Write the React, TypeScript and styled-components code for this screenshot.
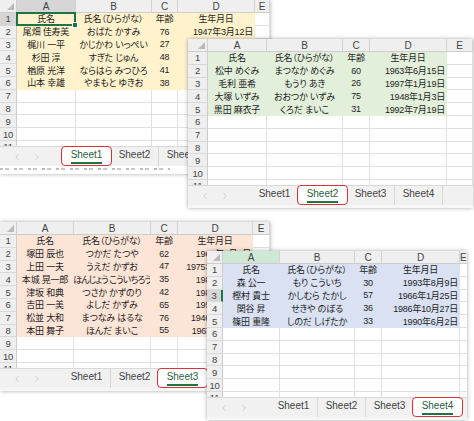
import styled, { createGlobalStyle } from 'styled-components'
import { ChevronLeft, ChevronRight } from 'lucide-react'

const GlobalStyle = createGlobalStyle`
  html, body {
    margin: 0;
    padding: 0;
    background: #fff;
  }
  body {
    font-family: "Liberation Sans", "Noto Sans CJK JP", sans-serif;
  }
`

type Sheet = {
  left: number
  top: number
  width: number
  z: number
  cols: number[]
  fill: string
  rows: string[][]
  active: number
  selCol?: number
  selRow?: number
  greenCol?: number
  status?: boolean
}

const HEAD = ['氏名', '氏名（ひらがな）', '年齢', '生年月日']
const LETTERS = ['A', 'B', 'C', 'D', 'E']
const TABS = ['Sheet1', 'Sheet2', 'Sheet3', 'Sheet4']

const sheets: Sheet[] = [
  {
    left: 0,
    top: 0,
    width: 270,
    z: 1,
    cols: [17, 59, 76, 26, 77],
    fill: '#fff2cc',
    active: 0,
    selCol: 0,
    selRow: 1,
    status: true,
    rows: [
      HEAD,
      ['尾畑 佳寿美', 'おばた かすみ', '76', '1947年3月12日'],
      ['梶川 一平', 'かじかわ いっぺい', '27', '1996年5月20日'],
      ['杉田 淳', 'すぎた じゅん', '48', '1975年9月1日'],
      ['楢原 光洋', 'ならはら みつひろ', '41', '1982年7月14日'],
      ['山本 幸雄', 'やまもと ゆきお', '38', '1985年2月8日']
    ]
  },
  {
    left: 188,
    top: 39,
    width: 285,
    z: 2,
    cols: [20, 59, 76, 27, 77],
    fill: '#e2efda',
    active: 1,
    rows: [
      HEAD,
      ['松中 めぐみ', 'まつなか めぐみ', '60', '1963年6月15日'],
      ['毛利 亜希', 'もうり あき', '26', '1997年1月19日'],
      ['大塚 いずみ', 'おおつか いずみ', '75', '1948年1月3日'],
      ['黒田 麻衣子', 'くろだ まいこ', '31', '1992年7月19日']
    ]
  },
  {
    left: 0,
    top: 222,
    width: 270,
    z: 3,
    cols: [17, 57, 77, 27, 75],
    fill: '#fce4d6',
    active: 2,
    rows: [
      HEAD,
      ['塚田 辰也', 'つかだ たつや', '62', '1961年8月2日'],
      ['上田 一夫', 'うえだ かずお', '47', '1975年10月12日'],
      ['本城 晃一郎', 'ほんじょう こういちろう', '35', '1988年3月5日'],
      ['津坂 和典', 'つさか かずのり', '42', '1981年9月8日'],
      ['吉田 一美', 'よしだ かずみ', '65', '1958年1月7日'],
      ['松並 大和', 'まつなみ はるな', '76', '1946年12月4日'],
      ['本田 舞子', 'ほんだ まいこ', '55', '1967年11月9日']
    ]
  },
  {
    left: 207,
    top: 251,
    width: 260,
    z: 4,
    cols: [16, 57, 75, 27, 78],
    fill: '#d9e1f2',
    active: 3,
    greenCol: 0,
    selRow: 3,
    rows: [
      HEAD,
      ['森 公一', 'もり こういち', '30', '1993年8月9日'],
      ['樫村 貴士', 'かしむら たかし', '57', '1966年1月25日'],
      ['関谷 昇', 'せきや のぼる', '36', '1986年10月27日'],
      ['篠田 重隆', 'しのだ しげたか', '33', '1990年6月2日']
    ]
  }
]

const App = () => {
  return (
    <>
      <GlobalStyle />
      <Canvas>
        {sheets.map((s, i) => (
          <Window key={i} $left={s.left} $top={s.top} $width={s.width} $z={s.z}>
            <Grid $cols={s.cols.map((c) => `${c}px`).join(' ') + ' 1fr'}>
              <Corner />
              {LETTERS.map((l, c) => (
                <ColHeader
                  key={l}
                  $hl={s.selCol === c && s.selRow !== undefined && s.greenCol === undefined}
                  $green={s.greenCol === c}
                >
                  {l}
                </ColHeader>
              ))}
              {Array.from({ length: 11 }, (_, r) => {
                const row = s.rows[r]
                return [
                  <RowHeader
                    key={`h${r}`}
                    $hl={s.selRow === r + 1}
                    $edge={s.greenCol !== undefined && s.selRow === r + 1}
                  >
                    {r + 1}
                  </RowHeader>,
                  ...[0, 1, 2, 3, 4].map((c) => {
                    const text = row && c < 4 ? row[c] : ''
                    return (
                      <Cell
                        key={`${r}-${c}`}
                        $fill={row && c < 4 ? s.fill : undefined}
                        $align={c === 3 && r > 0 ? 'right' : 'center'}
                        $selected={s.selCol === c && s.selRow === r + 1}
                        $tight={c === 1 && text.length > 10}
                      >
                        {text}
                      </Cell>
                    )
                  })
                ]
              })}
            </Grid>
            <TabBar>
              <Nav>
                <ChevronLeft size={10} strokeWidth={1.4} color="#b5b5b5" />
                <ChevronRight size={10} strokeWidth={1.4} color="#b5b5b5" />
              </Nav>
              {TABS.map((t, ti) => (
                <Tab key={t} $active={ti === s.active} $sep={ti !== s.active - 1}>
                  <TabLabel $active={ti === s.active}>{t}</TabLabel>
                </Tab>
              ))}
            </TabBar>
            {s.status ? <StatusStrip /> : <BottomEdge />}
          </Window>
        ))}
      </Canvas>
    </>
  )
}

export default App

const Canvas = styled.div`
  position: relative;
  width: 474px;
  height: 421px;
  overflow: hidden;
  background: #fff;
`

const Window = styled.div<{ $left: number; $top: number; $width: number; $z: number }>`
  position: absolute;
  left: ${(p) => p.$left}px;
  top: ${(p) => p.$top}px;
  width: ${(p) => p.$width}px;
  z-index: ${(p) => p.$z};
  display: flex;
  flex-direction: column;
  background: #f3f3f3;
  box-shadow: 0 0 4px rgba(0, 0, 0, 0.35);
  overflow: hidden;
`

const Grid = styled.div<{ $cols: string }>`
  display: grid;
  grid-template-columns: ${(p) => p.$cols};
  grid-template-rows: 13px repeat(11, 12.8px);
  height: 146px;
  overflow: hidden;
  background: #fff;
  font-feature-settings: 'palt' 1;
`

const Corner = styled.div`
  position: relative;
  background: #efefef;
  border-right: 1px solid #cdcdcd;
  border-bottom: 1px solid #cdcdcd;
  &::after {
    content: '';
    position: absolute;
    right: 2px;
    bottom: 2px;
    border-left: 7px solid transparent;
    border-bottom: 7px solid #b9b9b9;
  }
`

const ColHeader = styled.div<{ $hl?: boolean; $green?: boolean }>`
  box-sizing: border-box;
  display: flex;
  align-items: center;
  justify-content: center;
  font-size: 10px;
  color: #444;
  background: ${(p) => (p.$green ? '#cfe8d5' : p.$hl ? '#d6d6d6' : '#efefef')};
  border-right: 1px solid #d3d3d3;
  border-bottom: 1px solid #cdcdcd;
`

const RowHeader = styled.div<{ $hl?: boolean; $edge?: boolean }>`
  box-sizing: border-box;
  display: flex;
  align-items: center;
  justify-content: center;
  font-size: 9.5px;
  letter-spacing: -0.3px;
  color: #444;
  background: ${(p) => (p.$hl ? '#d6d6d6' : '#efefef')};
  border-right: ${(p) => (p.$edge ? '2px solid #217346' : '1px solid #cdcdcd')};
  border-bottom: 1px solid #d9d9d9;
`

const Cell = styled.div<{
  $fill?: string
  $align: 'center' | 'right'
  $selected?: boolean
  $tight?: boolean
}>`
  position: relative;
  box-sizing: border-box;
  display: flex;
  align-items: center;
  justify-content: ${(p) => (p.$align === 'right' ? 'flex-end' : 'center')};
  padding: 0 1px;
  font-size: 9px;
  letter-spacing: ${(p) => (p.$tight ? '-0.9px' : '-0.2px')};
  color: #1e1e1e;
  white-space: nowrap;
  overflow: ${(p) => (p.$selected ? 'visible' : 'hidden')};
  background: ${(p) => p.$fill || '#fff'};
  border-right: 1px solid ${(p) => (p.$fill ? 'transparent' : '#e0e0e0')};
  border-bottom: 1px solid ${(p) => (p.$fill ? 'transparent' : '#e0e0e0')};
  ${(p) =>
    p.$selected &&
    `
    &::after {
      content: '';
      position: absolute;
      inset: -1px;
      border: 2px solid #217346;
    }
    &::before {
      content: '';
      position: absolute;
      right: -3px;
      bottom: -3px;
      width: 4px;
      height: 4px;
      background: #217346;
      border: 1px solid #fff;
      z-index: 1;
    }
  `}
`

const TabBar = styled.div`
  display: flex;
  height: 20px;
  background: #f1f1f1;
  border-top: 1px solid #d9d9d9;
  box-sizing: border-box;
  font-family: "Liberation Sans", "Noto Sans", sans-serif;
`

const Nav = styled.div`
  display: flex;
  align-items: center;
  gap: 10px;
  width: 63px;
  flex-shrink: 0;
  padding-left: 12px;
  box-sizing: border-box;
`

const Tab = styled.div<{ $active?: boolean; $sep?: boolean }>`
  position: relative;
  box-sizing: border-box;
  width: 48px;
  flex-shrink: 0;
  display: flex;
  align-items: center;
  justify-content: center;
  background: ${(p) => (p.$active ? '#fff' : 'transparent')};
  border-right: 1px solid ${(p) => (p.$sep && !p.$active ? '#d6d6d6' : 'transparent')};
  ${(p) =>
    p.$active &&
    `
    &::after {
      content: '';
      position: absolute;
      top: -1px;
      bottom: 0;
      left: -2px;
      right: -2px;
      border: 1.5px solid #d9343d;
      border-radius: 4px;
    }
  `}
`

const TabLabel = styled.span<{ $active?: boolean }>`
  font-size: 10px;
  color: ${(p) => (p.$active ? '#2b5f3f' : '#444')};
  padding-bottom: 1px;
  border-bottom: 2px solid ${(p) => (p.$active ? '#217346' : 'transparent')};
  line-height: 12px;
`

const StatusStrip = styled.div`
  height: 8px;
  background:
    repeating-linear-gradient(
      90deg,
      #bdbdbd 0 3px,
      transparent 3px 5px,
      #c8c8c8 5px 9px,
      transparent 9px 14px
    )
    0 2px / 170px 2px no-repeat,
    #fff;
`

const BottomEdge = styled.div`
  height: 3px;
  background: #f6f6f6;
`
